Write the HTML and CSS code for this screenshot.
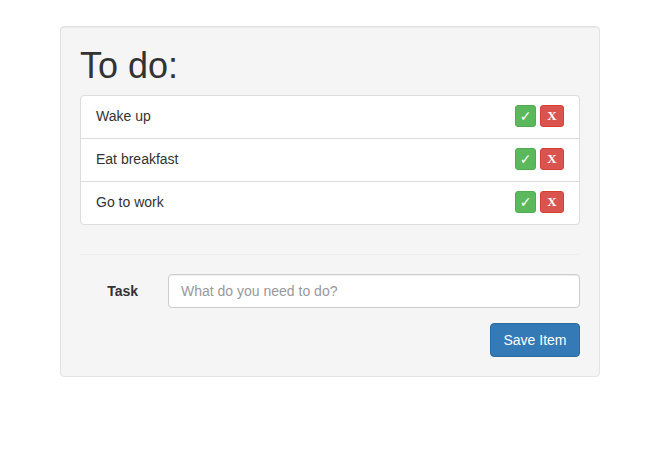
FILE: index.html
```html
<!DOCTYPE html>
<html lang="en">

<head>
  <meta charset="UTF-8">
  <title>To do</title>
  <link rel="stylesheet" href="styles.css">
</head>

<body>
  <div class="well">
    <h1>To do:</h1>
    <ul class="list_group">
      <li class="list_item">
        <span>Wake up</span>
        <div class="actions">
          <button class="btn_xs btn_done">✓</button>
          <button class="btn_xs btn_remove">X</button>
        </div>
      </li>
      <li class="list_item">
        <span>Eat breakfast</span>
        <div class="actions">
          <button class="btn_xs btn_done">✓</button>
          <button class="btn_xs btn_remove">X</button>
        </div>
      </li>
      <li class="list_item">
        <span>Go to work</span>
        <div class="actions">
          <button class="btn_xs btn_done">✓</button>
          <button class="btn_xs btn_remove">X</button>
        </div>
      </li>
    </ul>
    <hr>
    <form class="task_form">
      <div class="form_row">
        <label for="task">Task</label>
        <input id="task" type="text" placeholder="What do you need to do?">
      </div>
      <div class="form_submit">
        <button type="button" class="btn_save">Save Item</button>
      </div>
    </form>
  </div>
</body>

</html>
```

FILE: styles.css
```css
* {
  box-sizing: border-box;
}

body {
  margin: 0;
  padding: 26px 71px 0 60px;
  background: #fff;
  color: #333;
  font-family: "Liberation Sans", Arial, sans-serif;
  font-size: 14px;
  line-height: 20px;
}

.well {
  height: 351px;
  padding: 19px;
  background: #f5f5f5;
  border: 1px solid #e3e3e3;
  border-radius: 4px;
  box-shadow: inset 0 1px 1px rgba(0, 0, 0, .05);
}

h1 {
  margin: 0 0 9px;
  font-size: 36px;
  font-weight: 500;
  line-height: 39.6px;
}

.list_group {
  margin: 0;
  padding: 0;
  list-style: none;
  background: #fff;
  border: 1px solid #ddd;
  border-radius: 4px;
}

.list_item {
  display: flex;
  align-items: center;
  justify-content: space-between;
  height: 43px;
  padding: 0 15px 1px;
  border-bottom: 1px solid #ddd;
}

.list_item:last-child {
  height: 42px;
  padding-bottom: 2px;
  border-bottom: 0;
}

.actions {
  display: flex;
  gap: 4px;
}

.btn_xs {
  height: 22px;
  padding: 0;
  border: 1px solid;
  border-radius: 3px;
  color: #fff;
  line-height: 18px;
}

.btn_done {
  width: 21px;
  background: #5cb85c;
  border-color: #4cae4c;
  font-family: "DejaVu Sans", sans-serif;
  font-size: 14px;
}

.btn_remove {
  width: 24px;
  background: #d9534f;
  border-color: #d43f3a;
  font-family: "Liberation Serif", serif;
  font-size: 13px;
  font-weight: bold;
}

hr {
  margin: 29px 0 19px;
  border: 0;
  border-top: 1px solid #eee;
}

.form_row {
  display: flex;
  align-items: center;
}

label {
  width: 88px;
  padding-right: 30px;
  font-weight: bold;
  text-align: right;
}

input {
  flex: 1;
  height: 34px;
  padding: 6px 12px;
  color: #555;
  background: #fff;
  border: 1px solid #ccc;
  border-radius: 4px;
  box-shadow: inset 0 1px 1px rgba(0, 0, 0, .075);
  font: inherit;
}

input::placeholder {
  color: #999;
}

.form_submit {
  display: flex;
  justify-content: flex-end;
  margin-top: 15px;
}

.btn_save {
  width: 90px;
  height: 34px;
  padding: 6px 0;
  color: #fff;
  background: #337ab7;
  border: 1px solid #2e6da4;
  border-radius: 4px;
  font: inherit;
}
```
